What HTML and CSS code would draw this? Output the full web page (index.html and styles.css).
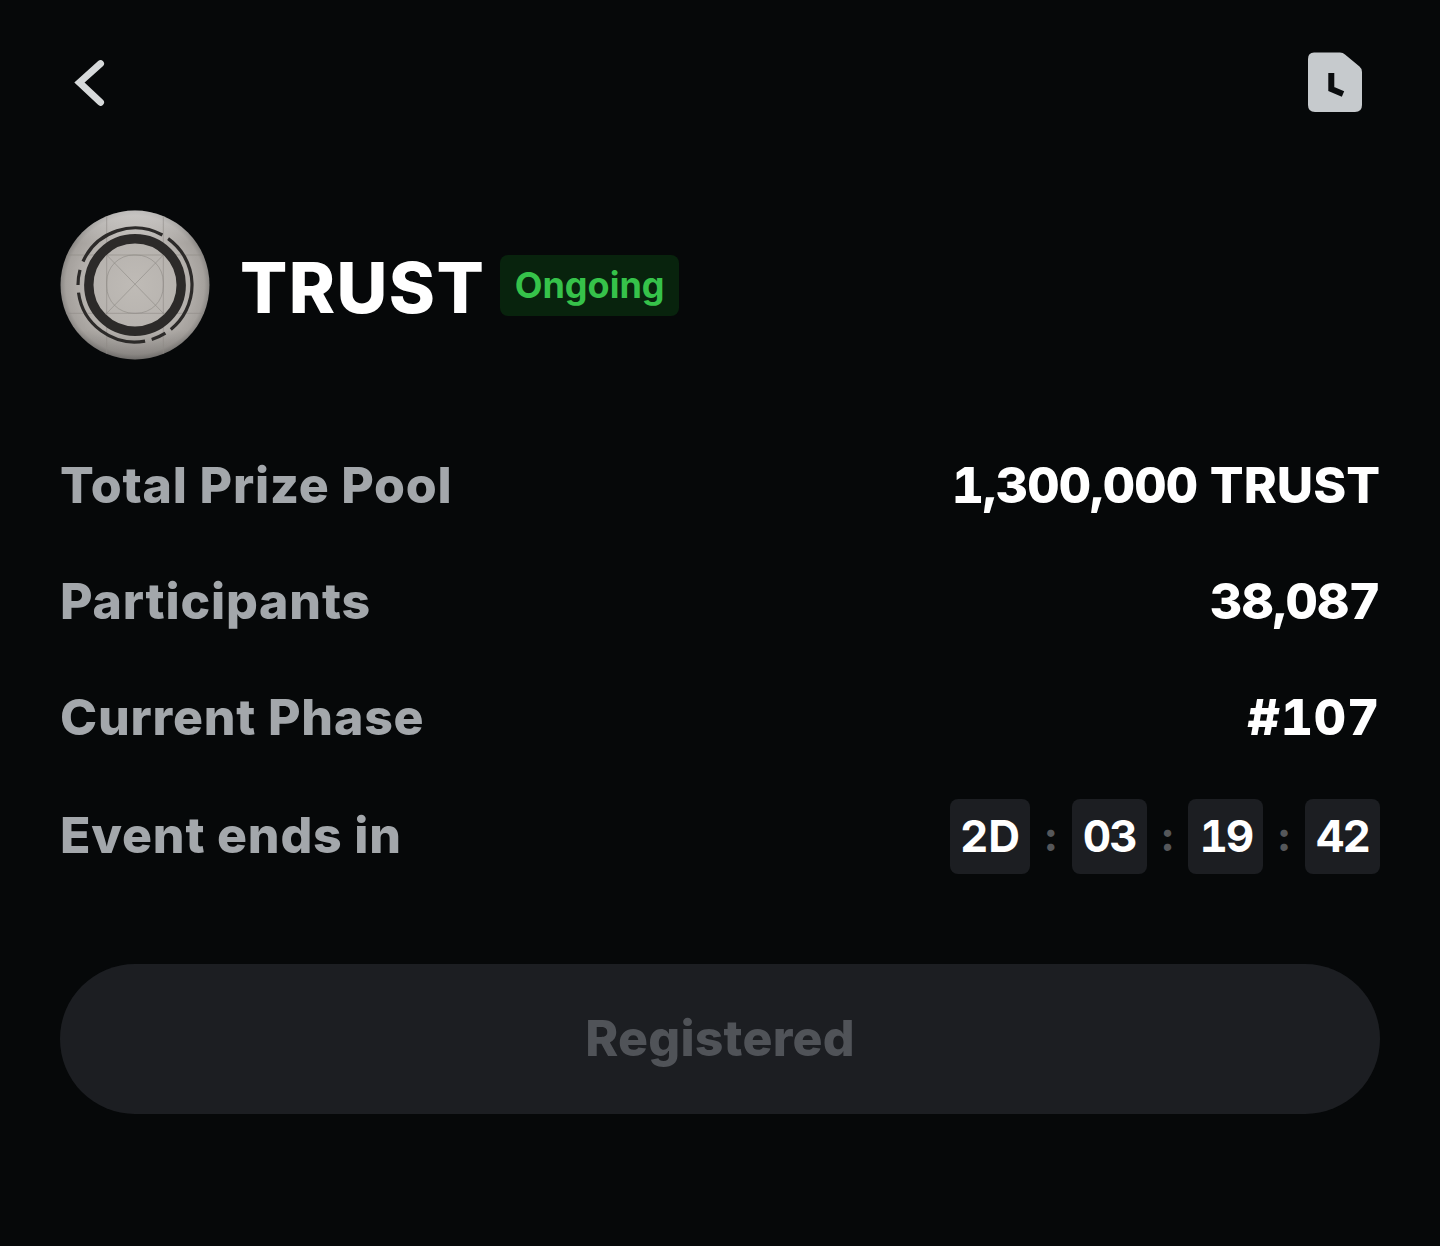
FILE: index.html
```html
<!DOCTYPE html>
<html lang="en">
<head>
<meta charset="utf-8">
<title>TRUST</title>
<link rel="stylesheet" href="styles.css">
</head>
<body>
<main class="page">
  <header class="topbar">
    <svg class="icon-back" width="36" height="48" viewBox="0 0 36 48"><path d="M28.500 5.700 L7.500 24.500 L28.500 44.300" fill="none" stroke="#d6d9da" stroke-width="7" stroke-linecap="round" stroke-linejoin="miter"/></svg>
    <svg class="icon-doc" width="54" height="60" viewBox="0 0 54 60"><path d="M6 0.500 H32 Q35 0.500 37 2.500 L51.500 14.500 Q54 16.500 54 20 V53 Q54 60 47 60 H7 Q0 60 0 53 V7 Q0 0.500 6 0.500 Z" fill="#c6cacd"/><path d="M23.300 21 V37 L35 42" fill="none" stroke="#0a0c0e" stroke-width="6"/></svg>
  </header>

  <section class="title-row">
    <svg class="token" width="150" height="150" viewBox="0 0 150 150">
      <defs>
        <radialGradient id="face" cx="50%" cy="50%" r="50%">
          <stop offset="0" stop-color="#bfbbb6"/>
          <stop offset="0.7" stop-color="#b5b1ad"/>
          <stop offset="0.93" stop-color="#a5a19d"/>
          <stop offset="1" stop-color="#8a8784"/>
        </radialGradient>
        <linearGradient id="sheen" x1="0" y1="0" x2="0" y2="1">
          <stop offset="0" stop-color="#fff" stop-opacity="0.45"/>
          <stop offset="0.22" stop-color="#fff" stop-opacity="0"/>
          <stop offset="0.8" stop-color="#000" stop-opacity="0"/>
          <stop offset="1" stop-color="#000" stop-opacity="0.2"/>
        </linearGradient>
        <clipPath id="disc"><circle cx="75" cy="75" r="74.500"/></clipPath>
      </defs>
      <circle cx="75" cy="75" r="74.500" fill="url(#face)"/>
      <circle cx="75" cy="75" r="74.500" fill="url(#sheen)"/>
      <g clip-path="url(#disc)" stroke="#8d8985" stroke-width="0.600" fill="none">
        <path d="M46.700 0 V150 M103.300 0 V150 M0 45 H150 M0 103.300 H150"/>
        <rect x="46.700" y="45" width="56.600" height="58.300" rx="27"/>
        <path d="M46.700 45 L103.300 103.300 M103.300 45 L46.700 103.300"/>
      </g>
      <circle cx="75" cy="75" r="46.200" fill="none" stroke="#2c2a29" stroke-width="9.400"/>
      <g fill="none" stroke="#2c2a29" stroke-width="3.200">
        <path d="M23 51.500 A57 57 0 0 1 102.400 25"/>
        <path d="M108.100 28.600 A57 57 0 0 1 110.800 119.400"/>
        <path d="M105.400 123.200 A57 57 0 0 1 91.700 129.500"/>
        <path d="M85.100 131.100 A57 57 0 0 1 18.500 82.600"/>
        <path d="M20 59.800 A57 57 0 0 0 18 75"/>
      </g>
    </svg>
    <h1 class="title">TRUST</h1>
    <span class="badge">Ongoing</span>
  </section>

  <dl class="stats">
    <div class="row"><dt class="label">Total Prize Pool</dt><dd class="value">1,300,000 <span class="value-word">TRUST</span></dd></div>
    <div class="row"><dt class="label">Participants</dt><dd class="value">38,087</dd></div>
    <div class="row"><dt class="label">Current Phase</dt><dd class="value value-phase">#107</dd></div>
    <div class="row row-last"><dt class="label">Event ends in</dt>
      <dd class="timer">
        <span class="cell cell-wide">2D</span><span class="colon">:</span>
        <span class="cell">03</span><span class="colon">:</span>
        <span class="cell">19</span><span class="colon">:</span>
        <span class="cell">42</span>
      </dd>
    </div>
  </dl>

  <button class="cta" type="button">Registered</button>
</main>
</body>
</html>
```
FILE: styles.css
```css
* { box-sizing: border-box; }
html, body { margin: 0; height: 100%; }
body {
  background: #060809;
  font-family: Inter, "Liberation Sans", sans-serif;
  color: #fff;
}
.page {
  width: 1440px;
  height: 1246px;
  overflow: hidden;
  padding: 52px 60px 0;
  display: flex;
  flex-direction: column;
}
.topbar {
  display: flex;
  justify-content: space-between;
  align-items: center;
  height: 60px;
  padding: 0 18px 0 12px;
}
.icon-back, .icon-doc { display: block; }
.title-row {
  display: flex;
  align-items: center;
  margin-top: 98px;
  height: 150px;
}
.token { display: block; flex: none; }
.title {
  margin: 5px 0 0 30px;
  font-size: 70px;
  font-weight: 800;
  line-height: 1;
  letter-spacing: 1.4px;
}
.badge {
  margin-left: 15px;
  height: 61px;
  padding: 0 14.500px;
  display: flex;
  align-items: center;
  background: #08230d;
  border-radius: 8px;
  color: #36c24a;
  font-size: 36px;
  font-weight: 700;
}
.stats { margin: 67px 0 0; }
.row {
  height: 116px;
  display: flex;
  justify-content: space-between;
  align-items: center;
}
.row-last { height: 120px; }
.label {
  font-size: 50px;
  font-weight: 800;
  letter-spacing: 0.8px;
  color: #a3a7ab;
}
.value {
  margin: 0;
  font-size: 50px;
  font-weight: 800;
  color: #fff;
  font-variant-numeric: tabular-nums;
  letter-spacing: -0.8px;
}
.value-word { letter-spacing: 0; }
.value-phase { letter-spacing: 0.8px; }
.timer {
  margin: 2px 0 0;
  display: flex;
  align-items: center;
}
.cell {
  width: 75px;
  height: 75px;
  display: flex;
  align-items: center;
  justify-content: center;
  background: #1c1e22;
  border-radius: 8px;
  font-size: 44px;
  font-weight: 700;
  font-variant-numeric: tabular-nums;
  letter-spacing: -2px;
}
.cell-wide { width: 80px; letter-spacing: 0; }
.colon {
  width: 41.670px;
  text-align: center;
  color: #55575a;
  font-size: 40px;
  font-weight: 800;
}
.cta {
  margin-top: 69px;
  height: 150px;
  width: 100%;
  border: 0;
  border-radius: 75px;
  padding: 0 0 3px;
  background: #1c1e22;
  color: #505358;
  font-family: inherit;
  font-size: 50px;
  font-weight: 800;
  letter-spacing: 0.2px;
}
```
